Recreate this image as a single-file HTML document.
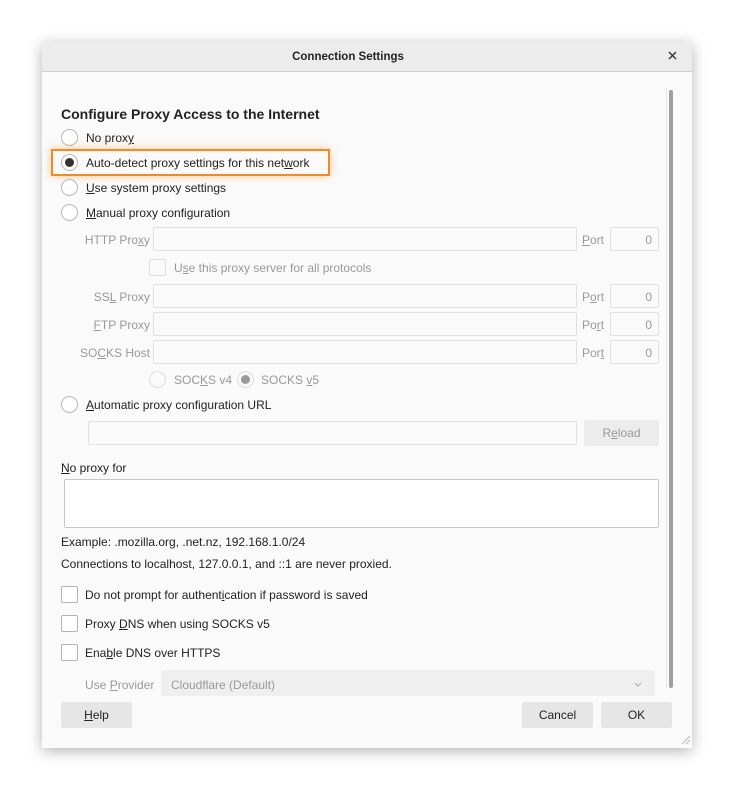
<!DOCTYPE html>
<html><head><style>
body{margin:0;width:734px;height:794px;background:#fff;position:relative;overflow:hidden;font-family:"Liberation Sans",sans-serif;font-size:12px;color:#222}
.a{position:absolute}
.t{position:absolute;line-height:14px;white-space:nowrap;margin-top:1px}
.dis{color:#999}
.dlg{left:42px;top:42px;width:650px;height:706px;background:#fafafa;box-shadow:0 3px 14px rgba(0,0,0,.3)}
.title{left:42px;top:42px;width:650px;height:29px;background:#ececec;border-bottom:1px solid #cfcfcf}
.r{position:absolute;width:15px;height:15px;border:1px solid #b8b8b8;border-radius:50%;background:#fff}
.r.d{border-color:#ddd;background:#fafafa}
.c{position:absolute;width:15px;height:15px;border:1px solid #b3b3b3;border-radius:2px;background:#fff}
.c.d{border-color:#ddd;background:#fafafa}
.in{position:absolute;border:1px solid #e0e0e0;border-radius:2px;background:#fafafa;box-sizing:border-box}
.btn{position:absolute;background:#e6e6e6;border-radius:2px;text-align:center;line-height:26px;height:26px}
u{text-decoration:underline}
</style></head><body>
<div class="a dlg"></div>
<div class="a title"></div>
<div class="t" style="left:0;width:696px;text-align:center;top:49px;font-weight:bold;font-size:11.5px">Connection Settings</div>
<svg class="a" style="left:668px;top:51px" width="9" height="9"><path d="M1 1L8 8M8 1L1 8" stroke="#333" stroke-width="1.4"/></svg>
<div class="a" style="left:669px;top:90px;width:4px;height:598px;background:#a0a0a0;border-radius:2px"></div>
<div class="a" style="left:666px;top:88px;width:1px;height:600px;background:#e6e6e6"></div>

<div class="t" style="left:61px;top:106px;font-size:14px;font-weight:bold;color:#222">Configure Proxy Access to the Internet</div>
<div class="r" style="left:61px;top:129px"></div><div class="t" style="left:86px;top:130px">No prox<u>y</u></div>
<div class="a" style="left:51px;top:149px;width:274px;height:23px;border:2px solid #f58a1f;box-shadow:0 0 8px rgba(245,138,31,.45);width:275px"></div>
<div class="r" style="left:61px;top:154px"></div><div class="a" style="left:65px;top:158px;width:9px;height:9px;border-radius:50%;background:#333"></div>
<div class="t" style="left:86px;top:155px">Auto-detect proxy settings for this net<u>w</u>ork</div>
<div class="r" style="left:61px;top:179px"></div><div class="t" style="left:86px;top:180px"><u>U</u>se system proxy settings</div>
<div class="r" style="left:61px;top:204px"></div><div class="t" style="left:86px;top:205px"><u>M</u>anual proxy configuration</div>

<div class="t dis" style="right:584px;top:232px">HTTP Pro<u>x</u>y</div>
<div class="in" style="left:153px;top:227px;width:424px;height:24px"></div>
<div class="t dis" style="left:582px;top:232px"><u>P</u>ort</div>
<div class="in" style="left:610px;top:227px;width:49px;height:24px"></div><div class="t dis" style="left:610px;width:42px;text-align:right;top:232px">0</div>
<div class="c d" style="left:149px;top:259px"></div><div class="t dis" style="left:174px;top:260px">U<u>s</u>e this proxy server for all protocols</div>

<div class="t dis" style="right:584px;top:289px">SS<u>L</u> Proxy</div>
<div class="in" style="left:153px;top:284px;width:424px;height:24px"></div>
<div class="t dis" style="left:582px;top:289px">P<u>o</u>rt</div>
<div class="in" style="left:610px;top:284px;width:49px;height:24px"></div><div class="t dis" style="left:610px;width:42px;text-align:right;top:289px">0</div>

<div class="t dis" style="right:584px;top:317px"><u>F</u>TP Proxy</div>
<div class="in" style="left:153px;top:312px;width:424px;height:24px"></div>
<div class="t dis" style="left:582px;top:317px">Po<u>r</u>t</div>
<div class="in" style="left:610px;top:312px;width:49px;height:24px"></div><div class="t dis" style="left:610px;width:42px;text-align:right;top:317px">0</div>

<div class="t dis" style="right:584px;top:345px">SO<u>C</u>KS Host</div>
<div class="in" style="left:153px;top:340px;width:424px;height:24px"></div>
<div class="t dis" style="left:582px;top:345px">Por<u>t</u></div>
<div class="in" style="left:610px;top:340px;width:49px;height:24px"></div><div class="t dis" style="left:610px;width:42px;text-align:right;top:345px">0</div>

<div class="r d" style="left:149px;top:371px"></div><div class="t dis" style="left:174px;top:372px">SOC<u>K</u>S v4</div>
<div class="r d" style="left:237px;top:371px"></div><div class="a" style="left:241px;top:375px;width:9px;height:9px;border-radius:50%;background:#999"></div>
<div class="t dis" style="left:261px;top:372px">SOCKS <u>v</u>5</div>

<div class="r" style="left:61px;top:396px"></div><div class="t" style="left:86px;top:397px"><u>A</u>utomatic proxy configuration URL</div>
<div class="in" style="left:88px;top:421px;width:489px;height:24px"></div>
<div class="btn dis" style="left:584px;top:419px;width:75px;background:#ececec;margin-top:1px">R<u>e</u>load</div>

<div class="t" style="left:61px;top:460px"><u>N</u>o proxy for</div>
<div class="in" style="left:64px;top:479px;width:595px;height:49px;border-color:#c8c8c8;background:#fff"></div>
<div class="t" style="left:61px;top:534px">Example: .mozilla.org, .net.nz, 192.168.1.0/24</div>
<div class="t" style="left:61px;top:556px">Connections to localhost, 127.0.0.1, and ::1 are never proxied.</div>

<div class="c" style="left:61px;top:586px"></div><div class="t" style="left:85px;top:587px">Do not prompt for authent<u>i</u>cation if password is saved</div>
<div class="c" style="left:61px;top:615px"></div><div class="t" style="left:85px;top:616px">Proxy <u>D</u>NS when using SOCKS v5</div>
<div class="c" style="left:61px;top:644px"></div><div class="t" style="left:85px;top:645px">Ena<u>b</u>le DNS over HTTPS</div>

<div class="t dis" style="left:85px;top:677px">Use <u>P</u>rovider</div>
<div class="a" style="left:161px;top:670px;width:494px;height:26px;background:#efefef;border-radius:2px"></div>
<div class="t dis" style="left:171px;top:677px">Cloudflare (Default)</div>
<svg class="a" style="left:634px;top:682px" width="8" height="5"><path d="M1 1L4 4L7 1" stroke="#aaa" fill="none"/></svg>

<div class="btn" style="left:61px;top:702px;width:71px"><u>H</u>elp</div>
<div class="btn" style="left:522px;top:702px;width:71px">Cancel</div>
<div class="btn" style="left:601px;top:702px;width:71px">OK</div>
<svg class="a" style="left:681px;top:735px" width="10" height="10"><path d="M9 1L1 9M9 5L5 9" stroke="#bbb"/></svg>
</body></html>
